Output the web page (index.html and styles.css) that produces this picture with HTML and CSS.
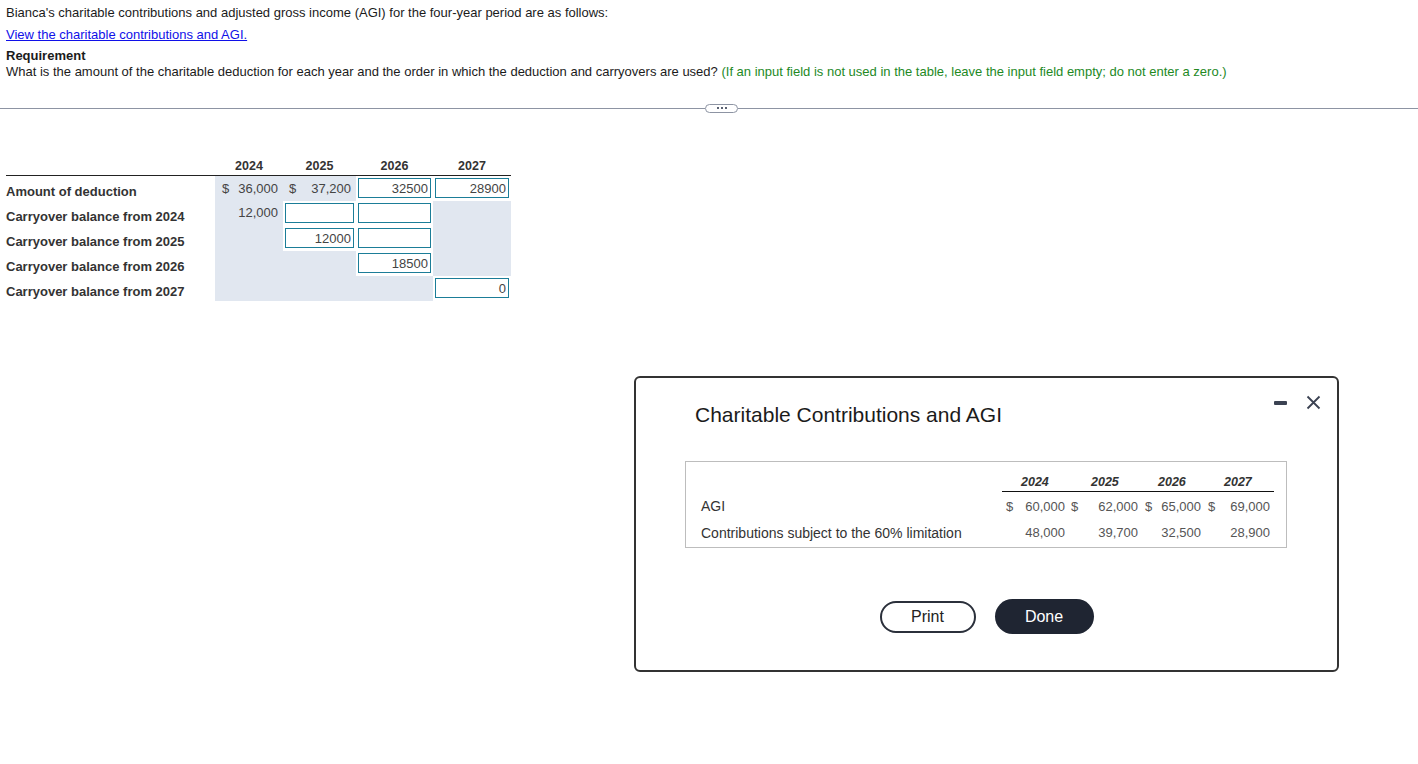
FILE: index.html
```html
<!DOCTYPE html>
<html>
<head>
<meta charset="utf-8">
<link rel="stylesheet" href="styles.css">
</head>
<body>
<div class="intro">
  <p>Bianca's charitable contributions and adjusted gross income (AGI) for the four-year period are as follows:</p>
  <p class="link-line"><a href="#" class="link">View the charitable contributions and AGI.</a></p>
  <p class="req-title">Requirement</p>
  <p>What is the amount of the charitable deduction for each year and the order in which the deduction and carryovers are used? <span class="hint">(If an input field is not used in the table, leave the input field empty; do not enter a zero.)</span></p>
</div>

<div class="sep">
  <div class="sep-line sep-left"></div>
  <div class="pill"><i></i><i></i><i></i></div>
  <div class="sep-line sep-right"></div>
</div>

<div class="ded-table">
  <div class="hd"></div>
  <div class="hd yr">2024</div>
  <div class="hd yr">2025</div>
  <div class="hd yr">2026</div>
  <div class="hd yr">2027</div>

  <div class="lbl">Amount of deduction</div>
  <div class="cell shade money"><span>$</span><span>36,000</span></div>
  <div class="cell shade money"><span>$</span><span>37,200</span></div>
  <div class="cell inp"><input type="text" value="32500"></div>
  <div class="cell inp"><input type="text" value="28900"></div>

  <div class="lbl">Carryover balance from 2024</div>
  <div class="cell shade num">12,000</div>
  <div class="cell inp"><input type="text" value=""></div>
  <div class="cell inp"><input type="text" value=""></div>
  <div class="cell shade"></div>

  <div class="lbl">Carryover balance from 2025</div>
  <div class="cell shade"></div>
  <div class="cell inp"><input type="text" value="12000"></div>
  <div class="cell inp"><input type="text" value=""></div>
  <div class="cell shade"></div>

  <div class="lbl">Carryover balance from 2026</div>
  <div class="cell shade"></div>
  <div class="cell shade"></div>
  <div class="cell inp"><input type="text" value="18500"></div>
  <div class="cell shade"></div>

  <div class="lbl">Carryover balance from 2027</div>
  <div class="cell shade"></div>
  <div class="cell shade"></div>
  <div class="cell shade"></div>
  <div class="cell inp"><input type="text" value="0"></div>
</div>

<div class="dialog">
  <div class="dlg-icons">
    <span class="minimize"></span>
    <svg class="close" width="15" height="15" viewBox="0 0 15 15"><path d="M1.5 1.5 L13.5 13.5 M13.5 1.5 L1.5 13.5" stroke="#3b4252" stroke-width="1.8" fill="none"/></svg>
  </div>
  <h2 class="dlg-title">Charitable Contributions and AGI</h2>
  <div class="agi-box">
    <div class="agi-grid">
      <div class="ah"></div>
      <div class="ah ayr y1">2024</div>
      <div class="ah ayr y2">2025</div>
      <div class="ah ayr y3">2026</div>
      <div class="ah ayr y4">2027</div>

      <div class="alb">AGI</div>
      <div class="av c1"><span>$</span><span>60,000</span></div>
      <div class="av c2"><span>$</span><span>62,000</span></div>
      <div class="av c3"><span>$</span><span>65,000</span></div>
      <div class="av c4"><span>$</span><span>69,000</span></div>

      <div class="alb">Contributions subject to the 60% limitation</div>
      <div class="av c1 r"><span>48,000</span></div>
      <div class="av c2 r"><span>39,700</span></div>
      <div class="av c3 r"><span>32,500</span></div>
      <div class="av c4 r"><span>28,900</span></div>
    </div>
  </div>
  <div class="dlg-buttons">
    <button class="btn btn-print">Print</button>
    <button class="btn btn-done">Done</button>
  </div>
</div>
</body>
</html>
```

FILE: styles.css
```css
html, body {
  margin: 0;
  padding: 0;
  background: #fff;
}
body {
  font-family: "Liberation Sans", Arial, sans-serif;
  font-size: 13px;
  color: #1b1b1b;
  width: 1418px;
  height: 764px;
  position: relative;
  overflow: hidden;
}
.intro {
  padding: 5px 6px 0;
}
.intro p {
  margin: 0;
  line-height: 16px;
}
.link-line { margin-top: 6px !important; }
.req-title {
  margin-top: 5px !important;
  font-weight: bold;
}
.link {
  color: #1010e8;
  text-decoration: underline;
}
.hint {
  color: #23891f;
}

/* separator */
.sep {
  display: flex;
  align-items: center;
  height: 10px;
  margin-top: 23px;
}
.sep-line {
  height: 1px;
  background: #8d94a3;
}
.sep-left { width: 705px; }
.sep-right { flex: 1; }
.pill {
  width: 31px;
  height: 7px;
  border: 1px solid #8d94a3;
  border-radius: 5px;
  display: flex;
  justify-content: center;
  align-items: center;
  gap: 2px;
  background: #fff;
}
.pill i {
  display: block;
  width: 2px;
  height: 2px;
  background: #5b6272;
}

/* deduction table */
.ded-table {
  display: grid;
  grid-template-columns: 209px 68px 73px 77px 78px;
  grid-auto-rows: 25px;
  grid-template-rows: 19px;
  margin: 44px 0 0 6px;
  width: 505px;
}
.hd {
  border-bottom: 1px solid #222;
  font-weight: bold;
  color: #333;
  font-size: 12.5px;
  text-align: center;
  line-height: 18px;
}
.lbl {
  font-weight: bold;
  color: #333;
  font-size: 13px;
  line-height: 16px;
  padding-top: 8px;
  white-space: nowrap;
}
.cell {
  box-sizing: border-box;
  color: #444;
  font-size: 13px;
}
.shade { background: #e1e7f0; }
.money {
  display: flex;
  justify-content: space-between;
  align-items: center;
  padding: 0 5px 0 7px;
}
.money + .money { padding-left: 6px; }
.num {
  text-align: right;
  padding: 4px 5px 0 0;
  line-height: 16px;
}
.inp {
  padding: 2px;
  background: #fff;
}
.inp input {
  display: block;
  box-sizing: border-box;
  width: 100%;
  height: 20px;
  margin: 0;
  border: 1px solid #1b7d98;
  border-radius: 0;
  padding: 0 2px 0 2px;
  text-align: right;
  font-family: "Liberation Sans", Arial, sans-serif;
  font-size: 13px;
  color: #444;
  background: #fff;
  outline: none;
}

/* dialog */
.dialog {
  position: absolute;
  left: 634px;
  top: 376px;
  width: 705px;
  height: 296px;
  box-sizing: border-box;
  border: 2px solid #333;
  border-radius: 6px;
  background: #fff;
}
.dlg-icons {
  position: absolute;
  top: 17px;
  right: 16px;
  display: flex;
  align-items: center;
  gap: 19px;
}
.minimize {
  display: block;
  width: 13px;
  height: 4px;
  border-radius: 1px;
  background: #3b4252;
  margin-top: 1px;
}
.close { display: block; }
.dlg-title {
  margin: 25px 0 0 59px;
  font-weight: normal;
  font-size: 21px;
  line-height: 24px;
  color: #1b1b1b;
}
.agi-box {
  margin: 34px 0 0 49px;
  width: 602px;
  height: 87px;
  box-sizing: border-box;
  border: 1px solid #bdbdbd;
  padding: 11px 13px 0 15px;
}
.agi-grid {
  display: grid;
  grid-template-columns: 301px 67px 73px 63px 69px;
  grid-template-rows: 19px 27px 25px;
  font-size: 13px;
}
.ah {
  line-height: 18px;
  font-weight: bold;
  font-style: italic;
  font-size: 12.5px;
  color: #333;
}
.ah.ayr { border-bottom: 1.5px solid #111; }
.ah:first-child { border-bottom: none; }
.y1 { padding-left: 19px; }
.y2 { padding-left: 22px; }
.y3 { padding-left: 16px; }
.y4 { padding-left: 19px; }
.alb {
  color: #333;
  font-size: 14px;
  line-height: 25px;
  padding-top: 2px;
  white-space: nowrap;
}
.av {
  display: flex;
  justify-content: space-between;
  align-items: center;
  padding-top: 2px;
  color: #555;
}
.av.r { justify-content: flex-end; }
.c1 { padding-left: 4px; padding-right: 4px; }
.c2 { padding-left: 2px; padding-right: 4px; }
.c3 { padding-left: 3px; padding-right: 4px; }
.c4 { padding-left: 3px; padding-right: 4px; }

.dlg-buttons {
  display: flex;
  justify-content: center;
  align-items: center;
  gap: 19px;
  margin-top: 51px;
}
.btn {
  font-family: "Liberation Sans", Arial, sans-serif;
  font-size: 16px;
  border-radius: 18px;
  cursor: pointer;
  padding: 0;
}
.btn-print {
  width: 96px;
  height: 32px;
  border: 2px solid #2b303b;
  background: #fff;
  color: #222;
}
.btn-done {
  width: 99px;
  height: 35px;
  border: none;
  background: #1f2532;
  color: #fff;
}
```
